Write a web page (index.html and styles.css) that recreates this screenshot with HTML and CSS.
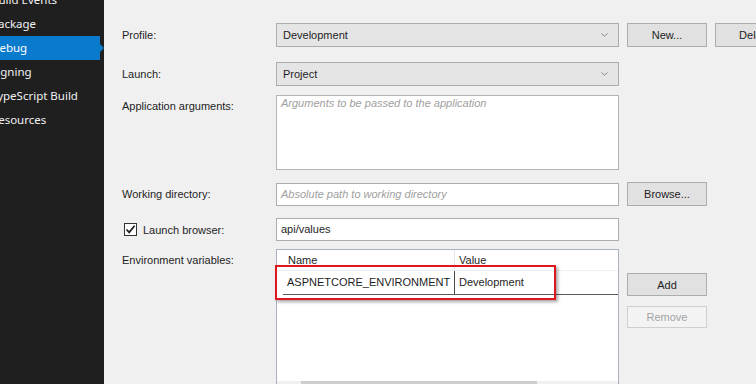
FILE: index.html
```html
<!DOCTYPE html>
<html lang="en">
<head>
    <meta charset="UTF-8">
    <title>Debug - Project Properties</title>
    <link rel="stylesheet" href="styles.css">
</head>
<body>
    <div class="window">
        <nav class="sidebar">
            <ul class="nav-list">
                <li>Build Events</li>
                <li>Package</li>
                <li class="active">Debug</li>
                <li>Signing</li>
                <li>TypeScript Build</li>
                <li>Resources</li>
            </ul>
        </nav>

        <main class="page">
            <div class="row row-profile">
                <div class="label">Profile:</div>
                <div class="select">
                    <span>Development</span>
                    <svg class="chevron" width="7" height="4" viewBox="0 0 7 4"><path d="M0.5 0.5 L3.5 3.2 L6.5 0.5" fill="none" stroke="#8a8a8a" stroke-width="1"/></svg>
                </div>
                <button class="btn">New...</button>
                <button class="btn">Delete</button>
            </div>

            <div class="row row-launch">
                <div class="label">Launch:</div>
                <div class="select">
                    <span>Project</span>
                    <svg class="chevron" width="7" height="4" viewBox="0 0 7 4"><path d="M0.5 0.5 L3.5 3.2 L6.5 0.5" fill="none" stroke="#8a8a8a" stroke-width="1"/></svg>
                </div>
            </div>

            <div class="row row-args">
                <div class="label label-top">Application arguments:</div>
                <div class="textarea placeholder">Arguments to be passed to the application</div>
            </div>

            <div class="row row-workdir">
                <div class="label">Working directory:</div>
                <div class="input placeholder">Absolute path to working directory</div>
                <button class="btn">Browse...</button>
            </div>

            <div class="row row-browser">
                <div class="label label-check">
                    <span class="checkbox">
                        <svg width="11" height="11" viewBox="0 0 11 11"><path d="M1.5 5.5 L4.2 8.4 L9.6 1.8" fill="none" stroke="#222" stroke-width="1.8"/></svg>
                    </span>
                    Launch browser:
                </div>
                <div class="input">api/values</div>
            </div>

            <div class="row row-env">
                <div class="label label-top">Environment variables:</div>
                <div class="env-table">
                    <div class="env-head">
                        <div class="cell cell-name">Name</div>
                        <div class="cell cell-value">Value</div>
                    </div>
                    <div class="env-row">
                        <div class="cell cell-name">ASPNETCORE_ENVIRONMENT</div>
                        <div class="cell cell-value">Development</div>
                    </div>
                    <div class="env-body"></div>
                    <div class="hscroll"><div class="thumb"></div></div>
                    <div class="highlight"></div>
                </div>
                <div class="env-buttons">
                    <button class="btn">Add</button>
                    <button class="btn" disabled>Remove</button>
                </div>
            </div>
        </main>
    </div>
</body>
</html>
```

FILE: styles.css
```css
body {
    margin: 0;
    width: 756px;
    height: 384px;
    overflow: hidden;
    background-color: #f0f0f0;
}
.window {
    display: flex;
    height: 384px;
}
.sidebar {
    width: 104px;
    flex-shrink: 0;
    background-color: #1f1f20;
    overflow: hidden;
}
.nav-list {
    list-style: none;
    margin: -12px 0 0 0;
    padding: 0;
}
.nav-list li {
    position: relative;
    height: 24px;
    line-height: 24px;
    width: 100px;
    padding-left: 0;
    text-indent: -9px;
    font-family: "Noto Sans", sans-serif;
    font-size: 11.5px;
    color: #f1f1f1;
    white-space: nowrap;
}
.nav-list li.active {
    background-color: #0a7acc;
    color: #ffffff;
}
.nav-list li.active::after {
    content: "";
    position: absolute;
    right: -4px;
    top: 8px;
    border-top: 4px solid transparent;
    border-bottom: 4px solid transparent;
    border-left: 4px solid #0a7acc;
}
.page {
    flex: 1;
    min-width: 0;
    padding: 23px 0 0 18px;
    overflow: hidden;
    font-family: "Liberation Sans", Arial, sans-serif;
    font-size: 11px;
    color: #1e1e1e;
}
.row {
    display: flex;
    align-items: center;
    gap: 8px;
    white-space: nowrap;
}
.row-profile { margin-bottom: 15px; }
.row-launch { margin-bottom: 9px; }
.row-args { margin-bottom: 12px; align-items: flex-start; }
.row-workdir { margin-bottom: 12px; }
.row-browser { margin-bottom: 8px; }
.row-env { align-items: flex-start; }
.label {
    width: 146px;
    flex-shrink: 0;
}
.label-top {
    padding-top: 5px;
}
.label-check {
    display: flex;
    align-items: center;
    gap: 6px;
    padding-left: 2px;
    width: 144px;
}
.checkbox {
    display: flex;
    align-items: center;
    justify-content: center;
    width: 11px;
    height: 11px;
    border: 1px solid #333333;
    background-color: #ffffff;
}
.select {
    display: flex;
    align-items: center;
    justify-content: space-between;
    box-sizing: border-box;
    width: 343px;
    height: 24px;
    padding: 0 10px 0 6px;
    flex-shrink: 0;
    background-color: #e5e5e5;
    border: 1px solid #acacac;
}
.input {
    box-sizing: border-box;
    width: 343px;
    height: 23px;
    line-height: 21px;
    padding: 0 4px;
    flex-shrink: 0;
    background-color: #ffffff;
    border: 1px solid #abadb3;
}
.textarea {
    box-sizing: border-box;
    width: 343px;
    height: 75px;
    padding: 1px 4px;
    flex-shrink: 0;
    background-color: #ffffff;
    border: 1px solid #b4b4b4;
}
.placeholder {
    color: #a0a0a0;
    font-style: italic;
}
.btn {
    box-sizing: border-box;
    width: 80px;
    height: 24px;
    flex-shrink: 0;
    padding: 0;
    font-family: "Liberation Sans", Arial, sans-serif;
    font-size: 11px;
    color: #1e1e1e;
    background-color: #e1e1e1;
    border: 1px solid #adadad;
}
.btn:disabled {
    color: #a3a3a3;
    background-color: #f3f3f3;
    border-color: #cfcfcf;
}
.env-table {
    position: relative;
    display: flex;
    flex-direction: column;
    box-sizing: border-box;
    width: 343px;
    height: 150px;
    flex-shrink: 0;
    background-color: #ffffff;
    border: 1px solid #a9b1c2;
}
.env-head,
.env-row {
    display: flex;
}
.env-head {
    height: 20px;
    line-height: 20px;
    border-bottom: 1px solid #f0f0f0;
}
.env-row {
    height: 23px;
    line-height: 22px;
    margin-left: 6px;
    border-bottom: 1px solid #5a5a5a;
}
.cell {
    box-sizing: border-box;
}
.env-head .cell-name {
    width: 178px;
    padding-left: 11px;
    border-right: 1px solid #e5e5e5;
}
.env-row .cell-name {
    width: 172px;
    padding-left: 4px;
    border-right: 1px solid #4a4a4a;
}
.cell-value {
    padding-left: 4px;
}
.env-body {
    flex: 1;
}
.hscroll {
    height: 17px;
    margin-bottom: 0;
    background-color: #f0f0f0;
    padding-left: 24px;
}
.thumb {
    width: 236px;
    height: 17px;
    background-color: #cdcdcd;
}
.highlight {
    position: absolute;
    left: -2px;
    top: 15px;
    width: 277px;
    height: 31px;
    border: 2px solid #e0161e;
    box-shadow: 2px 2px 3px rgba(0, 0, 0, 0.35);
}
.env-buttons {
    display: flex;
    flex-direction: column;
    gap: 10px;
    margin-top: 24px;
}
.env-buttons .btn {
    height: 23px;
}
.env-buttons .btn:disabled {
    height: 22px;
}
```
